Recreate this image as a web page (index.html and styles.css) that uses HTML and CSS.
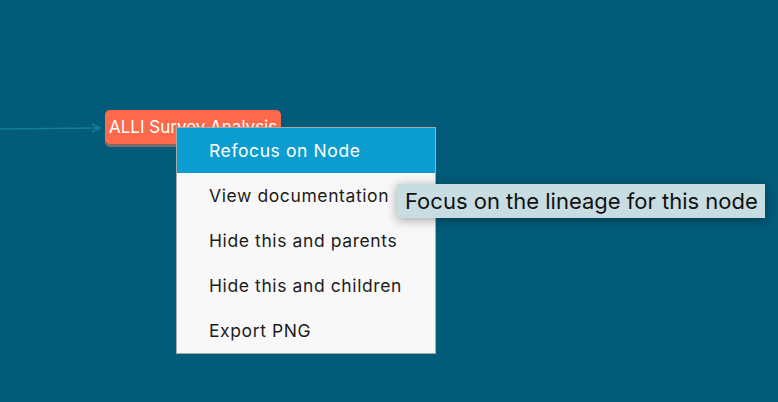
FILE: index.html
```html
<!DOCTYPE html>
<html>
<head>
<meta charset="utf-8">
<link rel="stylesheet" href="styles.css">
</head>
<body>
<div class="canvas">
  <svg class="edge" width="110" height="20" viewBox="0 0 110 20">
    <line x1="0" y1="10" x2="98" y2="9" stroke="#147e9c" stroke-width="1.5"/>
    <path d="M92 5 L100 9 L92 13" fill="none" stroke="#147e9c" stroke-width="1.5"/>
  </svg>
  <div class="node">ALLI Survey Analysis</div>
  <ul class="menu">
    <li class="item active">Refocus on Node</li>
    <li class="item">View documentation</li>
    <li class="item">Hide this and parents</li>
    <li class="item">Hide this and children</li>
    <li class="item">Export PNG</li>
  </ul>
  <div class="tooltip">Focus on the lineage for this node</div>
</div>
</body>
</html>
```
FILE: styles.css
```css
html, body {
  margin: 0;
  padding: 0;
  background: #025b79;
  width: 778px;
  height: 402px;
  overflow: hidden;
}
.canvas {
  position: relative;
  width: 778px;
  height: 402px;
  font-family: Inter, "Noto Sans", sans-serif;
}
.edge {
  position: absolute;
  left: 0;
  top: 119px;
}
.node {
  position: absolute;
  left: 105px;
  top: 110px;
  width: 176px;
  height: 34px;
  padding: 0 4px;
  box-sizing: border-box;
  display: flex;
  align-items: center;
  background: #fe694b;
  color: #fff;
  font-size: 17px;
  border-radius: 5px;
  box-shadow: 0 3px 0 #7a6b6b;
  white-space: nowrap;
}
.menu {
  position: absolute;
  left: 176px;
  top: 127px;
  width: 260px;
  margin: 0;
  padding: 0;
  list-style: none;
  background: #f8f8f8;
  border: 1px solid #a9a9a9;
  box-sizing: border-box;
}
.item {
  height: 45px;
  display: flex;
  align-items: center;
  padding-left: 32px;
  font-size: 17.5px;
  letter-spacing: 0.6px;
  color: #1c1c1c;
}
.item.active {
  background: #0c9dd0;
  color: #fff;
}
.tooltip {
  position: absolute;
  left: 397px;
  top: 184px;
  height: 34px;
  padding: 0 7px 0 8px;
  box-sizing: border-box;
  display: flex;
  align-items: center;
  background: #c7dde2;
  color: #111;
  font-size: 22px;
  box-shadow: 0 2px 10px rgba(0,0,0,0.35);
  white-space: nowrap;
}
```
